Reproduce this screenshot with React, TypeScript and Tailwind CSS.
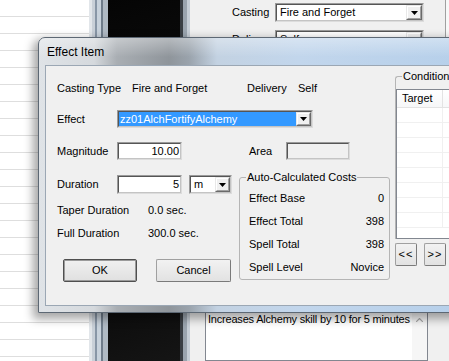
import React from "react";

const Arrow = () => (
  <svg width="7" height="4" viewBox="0 0 7 4">
    <path d="M0 0h7L3.5 4z" fill="#000" />
  </svg>
);

function Sunken({
  className = "",
  innerClassName = "",
  children,
}: {
  className?: string;
  innerClassName?: string;
  children?: React.ReactNode;
}) {
  return (
    <div
      className={
        "border border-t-[#9a9a9a] border-l-[#9a9a9a] border-b-[#dcdcdc] border-r-[#dcdcdc] " +
        className
      }
    >
      <div
        className={
          "h-full w-full border border-t-[#555555] border-l-[#555555] border-b-[#c4c4c4] border-r-[#c4c4c4] " +
          innerClassName
        }
      >
        {children}
      </div>
    </div>
  );
}

function DropBtn({ className = "" }: { className?: string }) {
  return (
    <div
      className={
        "border border-t-[#e8e8e8] border-l-[#e8e8e8] border-b-[#6a6a6a] border-r-[#6a6a6a] bg-[#f0f0f0] " +
        className
      }
    >
      <div className="flex h-full w-full items-center justify-center border border-t-white border-l-white border-b-[#a0a0a0] border-r-[#a0a0a0]">
        <Arrow />
      </div>
    </div>
  );
}

function Combo({
  className = "",
  text,
  selected = false,
  btnClass = "w-[15px]",
}: {
  className?: string;
  text: string;
  selected?: boolean;
  btnClass?: string;
}) {
  return (
    <Sunken className={className} innerClassName="flex bg-white">
      <div
        className={
          selected
            ? "flex flex-1 items-center overflow-hidden bg-[#3399ff] pl-[1px] text-white"
            : "flex flex-1 items-center overflow-hidden pl-[3px]"
        }
      >
        <span className="whitespace-nowrap">{text}</span>
      </div>
      <DropBtn className={"h-full " + btnClass} />
    </Sunken>
  );
}

export default function App() {
  return (
    <div className="relative h-[361px] w-[449px] overflow-hidden bg-white font-['Liberation_Sans',Arial,sans-serif] text-[11px] leading-[13px] text-black">
      {/* left list window */}
      <div className="absolute left-0 top-0 flex h-full w-[89px] flex-col bg-white">
        {Array.from({ length: 22 }).map((_, i) => (
          <div key={i} className="h-[17px] shrink-0 border-b border-[#dedede]" />
        ))}
      </div>

      {/* dark preview window */}
      <div className="absolute left-[89px] top-0 flex h-full">
        <div className="w-[3px] bg-[#e2e6ea]" />
        <div className="w-[3px] bg-[#c9d0d8]" />
        <div className="w-[2px] bg-[#8896a6]" />
        <div className="w-[4px] bg-[#c8d2dc]" />
        <div className="w-[2px] bg-[#6f7c8a]" />
        <div className="w-[5px] bg-[#b0bac4]" />
        <div className="w-[72px] bg-[linear-gradient(160deg,#050505_0%,#111111_45%,#1e1e1e_60%,#0c0c0c_80%,#151515_100%)]" />
        <div className="w-[3px] bg-[#3a3f44]" />
        <div className="w-[4px] bg-[#9aa4ae]" />
        <div className="w-[3px] bg-[#c6ced6]" />
      </div>

      {/* background main window */}
      <div className="absolute bottom-0 left-[190px] right-0 top-0 flex flex-col bg-[#f0f0f0]">
        <div className="flex h-[60px]">
          <div className="flex w-[255px] flex-col">
            <div className="mt-[3px] flex h-[19px] items-center">
              <span className="ml-[42px] w-[43px]">Casting</span>
              <Combo className="h-[19px] w-[149px]" text="Fire and Forget" btnClass="w-[16px]" />
            </div>
            <div className="mt-[8px] flex h-[19px] items-center">
              <span className="ml-[42px] w-[43px]">Delivery</span>
              <Combo className="h-[19px] w-[149px]" text="Self" btnClass="w-[16px]" />
            </div>
          </div>
          <div className="w-px bg-[#a0a0a0]" />
          <div className="flex-1 bg-[#f8f8f8]" />
        </div>
        <div className="ml-[17px] mt-[246px] h-[14px]">Description</div>
        <div className="ml-[15px] mt-[2px] flex h-[60px] w-[223px] border border-[#828790] bg-white">
          <div className="flex-1 whitespace-nowrap px-[2px] pt-[1px] tracking-[-0.2px]">
            Increases Alchemy skill by 10 for 5 minutes
          </div>
          <div className="flex w-[17px] justify-center bg-[#f6f6f6] pt-[6px]">
            <svg width="7" height="4" viewBox="0 0 7 4">
              <path d="M0 4L3.5 0.5L7 4" fill="none" stroke="#a8a8a8" strokeWidth="1.2" />
            </svg>
          </div>
        </div>
      </div>

      {/* Effect Item dialog */}
      <div className="absolute left-[38px] top-[37px] flex h-[276px] w-[440px] flex-col rounded-t-[7px] border border-[#5d6874] bg-[linear-gradient(90deg,#dfe3e7_0px,#d5d9dd_55px,#a9aeb3_78px,#8f959b_130px,#9aa3ac_150px,#c3d2e2_178px,#c2d6ec_260px,#b5cfea_440px)] shadow-[-3px_4px_10px_2px_rgba(0,0,0,0.35)]">
        <div className="flex h-[27px] items-center rounded-t-[6px] bg-[linear-gradient(180deg,rgba(255,255,255,0.35),rgba(255,255,255,0)_70%)] pl-[8px] text-[12px] leading-[14px]">
          Effect Item
        </div>
        <div className="mb-[6px] ml-[6px] flex flex-1 items-start border border-[#9ba7b4] bg-[#f0f0f0]">
          {/* left part */}
          <div className="flex w-[349px] shrink-0 flex-col pl-[11px]">
            <div className="mt-[16px] flex h-[13px]">
              <span className="w-[75px]">Casting Type</span>
              <span className="w-[115px]">Fire and Forget</span>
              <span className="w-[51px]">Delivery</span>
              <span>Self</span>
            </div>
            <div className="mt-[15px] flex h-[18px] items-center">
              <span className="w-[60px]">Effect</span>
              <Combo className="h-[18px] w-[196px]" text="zz01AlchFortifyAlchemy" selected />
            </div>
            <div className="mt-[14px] flex h-[18px] items-center">
              <span className="w-[60px]">Magnitude</span>
              <Sunken className="h-full w-[65px]" innerClassName="flex items-center justify-end bg-white pr-[1px]">
                10.00
              </Sunken>
              <span className="ml-[67px] w-[37px]">Area</span>
              <Sunken className="h-full w-[64px]" innerClassName="bg-[#f0f0f0]" />
            </div>
            <div className="mt-[11px] flex items-start">
              <div className="flex w-[182px] shrink-0 flex-col">
                <div className="mt-[4px] flex h-[19px] items-center">
                  <span className="w-[60px]">Duration</span>
                  <Sunken className="h-full w-[65px]" innerClassName="flex items-center justify-end bg-white pr-[1px]">
                    5
                  </Sunken>
                  <Combo className="ml-[7px] h-full w-[43px]" text="m" btnClass="w-[15px]" />
                </div>
                <div className="mt-[10px] flex h-[13px]">
                  <span className="w-[91px]">Taper Duration</span>
                  <span>0.0 sec.</span>
                </div>
                <div className="mt-[10px] flex h-[13px]">
                  <span className="w-[91px]">Full Duration</span>
                  <span>300.0 sec.</span>
                </div>
                <div className="mt-[19px] flex">
                  <button className="ml-[6px] flex h-[23px] w-[74px] items-center justify-center rounded-[2px] border border-[#4f4f4f] bg-[linear-gradient(180deg,#f0f0f0,#e0e0e0)] shadow-[inset_0_0_0_1px_#9a9a9a]">
                    OK
                  </button>
                  <button className="ml-[19px] flex h-[23px] w-[75px] items-center justify-center rounded-[2px] border border-[#a0a0a0] border-b-[#7a7a7a] border-r-[#7a7a7a] bg-[linear-gradient(180deg,#f2f2f2,#e2e2e2)]">
                    Cancel
                  </button>
                </div>
              </div>
              <fieldset className="w-[151px] shrink-0 rounded-[3px] border border-[#b5b5b5]">
                <legend className="ml-[6px] px-[1px] leading-[13px]">Auto-Calculated Costs</legend>
                <div className="mt-[3px] flex flex-col">
                  <div className="flex h-[23px] items-center justify-between pl-[9px] pr-[5px]">
                    <span>Effect Base</span>
                    <span>0</span>
                  </div>
                  <div className="flex h-[23px] items-center justify-between pl-[9px] pr-[5px]">
                    <span>Effect Total</span>
                    <span>398</span>
                  </div>
                  <div className="flex h-[23px] items-center justify-between pl-[9px] pr-[5px]">
                    <span>Spell Total</span>
                    <span>398</span>
                  </div>
                  <div className="flex h-[23px] items-center justify-between pl-[9px] pr-[5px]">
                    <span>Spell Level</span>
                    <span>Novice</span>
                  </div>
                </div>
              </fieldset>
            </div>
          </div>

          {/* Condition column */}
          <div className="flex flex-col">
            <fieldset className="mt-[4px] w-[120px] rounded-tl-[3px] border-l border-t border-[#b5b5b5]">
              <legend className="ml-[6px] px-[1px] leading-[13px]">Condition</legend>
              <div className="mt-[6px] flex h-[150px] flex-col border border-[#828790] bg-white">
                <div className="flex h-[18px] shrink-0 border-b border-[#e3e3e3] bg-[linear-gradient(180deg,#ffffff,#f6f7f8)]">
                  <div className="flex w-[46px] items-center border-r border-[#e3e3e3] pl-[5px]">Target</div>
                  <div className="flex-1" />
                </div>
                {Array.from({ length: 8 }).map((_, i) => (
                  <div key={i} className="flex h-[15px] shrink-0 border-b border-[#f0f0f0]">
                    <div className="w-[46px] border-r border-[#f0f0f0]" />
                  </div>
                ))}
              </div>
            </fieldset>
            <div className="mt-[4px] flex gap-[7px]">
              <button className="flex h-[23px] w-[22px] items-center justify-center rounded-[2px] border border-[#a0a0a0] border-b-[#7a7a7a] border-r-[#7a7a7a] bg-[linear-gradient(180deg,#f2f2f2,#e2e2e2)] tracking-[1px]">
                {"<<"}
              </button>
              <button className="flex h-[23px] w-[22px] items-center justify-center rounded-[2px] border border-[#a0a0a0] border-b-[#7a7a7a] border-r-[#7a7a7a] bg-[linear-gradient(180deg,#f2f2f2,#e2e2e2)] tracking-[1px]">
                {">>"}
              </button>
            </div>
          </div>
        </div>
      </div>
    </div>
  );
}
